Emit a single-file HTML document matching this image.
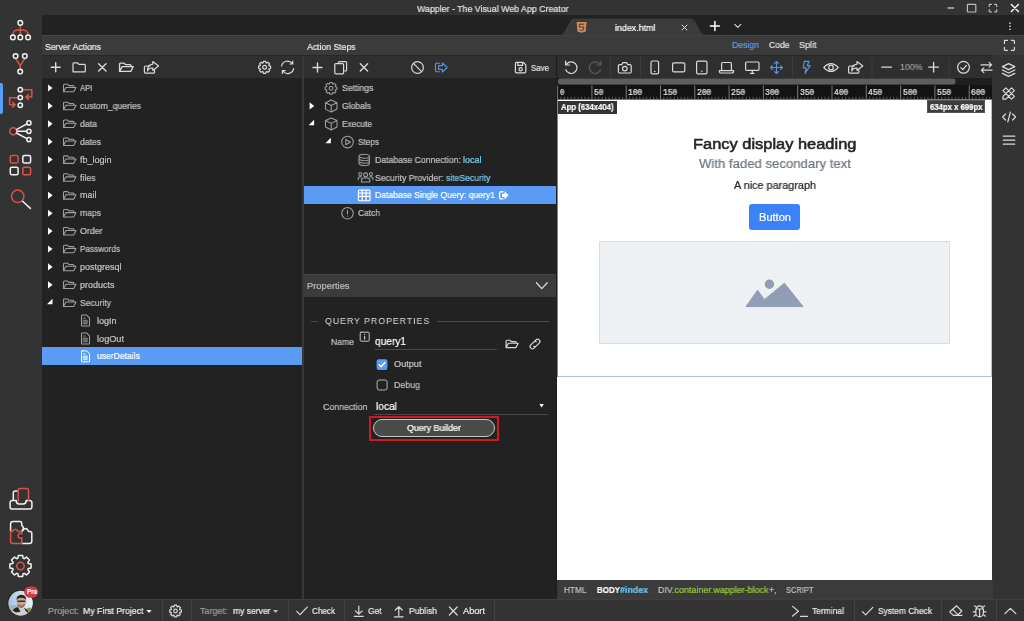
<!DOCTYPE html>
<html><head><meta charset="utf-8">
<style>
*{box-sizing:border-box;margin:0;padding:0}
html,body{width:1024px;height:621px;overflow:hidden;background:#222;font-family:"Liberation Sans",sans-serif;font-size:10px;color:#c4c4c4}
.abs{position:absolute}
.t{position:absolute;white-space:nowrap;transform-origin:0 50%;display:block;will-change:transform;-webkit-text-stroke:.22px currentColor}
svg{position:absolute;overflow:visible}
.i{fill:none;stroke:#dadada;stroke-width:1.2;stroke-linecap:round;stroke-linejoin:round}
.d{color:#9c9c9c;fill:none;stroke:#a0a0a0;stroke-width:1.05;stroke-linecap:round;stroke-linejoin:round}
.w{fill:none;stroke:#f2f2f2;stroke-width:1.5;stroke-linecap:round;stroke-linejoin:round}
.r{fill:none;stroke:#d9534d;stroke-width:1.5;stroke-linecap:round;stroke-linejoin:round}
.f{fill:#fff;stroke:none}
.dw{color:#fff;fill:none;stroke:#fff;stroke-width:1;stroke-linecap:round;stroke-linejoin:round}
.b{fill:none;stroke:#5794e6;stroke-width:1.15;stroke-linecap:round;stroke-linejoin:round}
</style></head><body>
<div class="abs" style="left:0px;top:0px;width:1024px;height:15px;background:#333333;"></div>
<div class="abs" style="left:0px;top:0px;width:42px;height:621px;background:#333333;"></div>
<div class="abs" style="left:42px;top:15px;width:982px;height:20px;background:#222222;"></div>
<div class="abs" style="left:42px;top:35px;width:982px;height:20px;background:#3b3b3b;border-top:1px solid #464646"></div>
<div class="abs" style="left:42px;top:55px;width:982px;height:1.4px;background:#272727;"></div>
<div class="abs" style="left:42px;top:56.4px;width:260px;height:21.2px;background:#2f2f2f;"></div>
<div class="abs" style="left:304px;top:56.4px;width:253px;height:21.2px;background:#2f2f2f;"></div>
<div class="abs" style="left:557px;top:56.4px;width:435px;height:21.6px;background:#2f2f2f;"></div>
<div class="abs" style="left:556px;top:56.4px;width:1px;height:543px;background:#1c1c1c;"></div>
<div class="abs" style="left:301.7px;top:56.4px;width:2.3px;height:543px;background:#383838;"></div>
<div class="abs" style="left:992px;top:55px;width:32px;height:545px;background:#333333;"></div>
<div class="abs" style="left:557px;top:78px;width:435px;height:7px;background:#1e1e1e;"></div>
<div class="abs" style="left:557px;top:85px;width:435px;height:15px;background:#131313;"></div>
<div class="abs" style="left:557px;top:99px;width:435px;height:481px;background:#ffffff;"></div>
<div class="abs" style="left:557px;top:580px;width:436px;height:19px;background:#3b3b3b;"></div>
<div class="abs" style="left:42px;top:599px;width:982px;height:22px;background:#333333;border-top:1px solid #404040"></div>
<svg style="left:0;top:0" width="1024" height="621" viewBox="0 0 1024 621"><path d="M559,35.5 C567,35.5 567,18.5 575.5,18.5 H690 C698.5,18.5 698.5,35.5 706,35.5 Z" fill="#3b3b3b"/></svg>
<span class="t" style="left:416.50px;top:4.25px;font-size:9.5px;line-height:9.5px;color:#e4e4e4;font-family:'Liberation Sans',sans-serif;transform:scaleX(0.9276);">Wappler - The Visual Web App Creator</span>
<span class="t" style="left:45.00px;top:42.94px;font-size:9.3px;line-height:9.3px;color:#ececec;font-family:'Liberation Sans',sans-serif;transform:scaleX(0.9340);">Server Actions</span>
<span class="t" style="left:307.00px;top:42.94px;font-size:9.3px;line-height:9.3px;color:#ececec;font-family:'Liberation Sans',sans-serif;transform:scaleX(0.9289);">Action Steps</span>
<span class="t" style="left:80.00px;top:84.07px;font-size:9px;line-height:9px;color:#c2c2c2;font-family:'Liberation Sans',sans-serif;transform:scaleX(0.8617);">API</span>
<span class="t" style="left:80.00px;top:101.96px;font-size:9px;line-height:9px;color:#c2c2c2;font-family:'Liberation Sans',sans-serif;transform:scaleX(0.9602);">custom_queries</span>
<span class="t" style="left:80.00px;top:119.85px;font-size:9px;line-height:9px;color:#c2c2c2;font-family:'Liberation Sans',sans-serif;transform:scaleX(0.9706);">data</span>
<span class="t" style="left:80.00px;top:137.74px;font-size:9px;line-height:9px;color:#c2c2c2;font-family:'Liberation Sans',sans-serif;transform:scaleX(0.9539);">dates</span>
<span class="t" style="left:80.00px;top:155.63px;font-size:9px;line-height:9px;color:#c2c2c2;font-family:'Liberation Sans',sans-serif;transform:scaleX(0.9993);">fb_login</span>
<span class="t" style="left:80.00px;top:173.52px;font-size:9px;line-height:9px;color:#c2c2c2;font-family:'Liberation Sans',sans-serif;transform:scaleX(0.9685);">files</span>
<span class="t" style="left:80.00px;top:191.41px;font-size:9px;line-height:9px;color:#c2c2c2;font-family:'Liberation Sans',sans-serif;transform:scaleX(0.9999);">mail</span>
<span class="t" style="left:80.00px;top:209.30px;font-size:9px;line-height:9px;color:#c2c2c2;font-family:'Liberation Sans',sans-serif;transform:scaleX(0.9543);">maps</span>
<span class="t" style="left:80.00px;top:227.19px;font-size:9px;line-height:9px;color:#c2c2c2;font-family:'Liberation Sans',sans-serif;transform:scaleX(0.9781);">Order</span>
<span class="t" style="left:80.00px;top:245.08px;font-size:9px;line-height:9px;color:#c2c2c2;font-family:'Liberation Sans',sans-serif;transform:scaleX(0.9088);">Passwords</span>
<span class="t" style="left:80.00px;top:262.97px;font-size:9px;line-height:9px;color:#c2c2c2;font-family:'Liberation Sans',sans-serif;transform:scaleX(0.9995);">postgresql</span>
<span class="t" style="left:80.00px;top:280.86px;font-size:9px;line-height:9px;color:#c2c2c2;font-family:'Liberation Sans',sans-serif;transform:scaleX(0.9995);">products</span>
<span class="t" style="left:80.00px;top:298.75px;font-size:9px;line-height:9px;color:#c2c2c2;font-family:'Liberation Sans',sans-serif;transform:scaleX(0.9536);">Security</span>
<div class="abs" style="left:42px;top:347px;width:260px;height:18px;background:#5a9cf4;"></div>
<span class="t" style="left:96.50px;top:316.64px;font-size:9px;line-height:9px;color:#c2c2c2;font-family:'Liberation Sans',sans-serif;transform:scaleX(0.9993);">logIn</span>
<span class="t" style="left:96.50px;top:334.53px;font-size:9px;line-height:9px;color:#c2c2c2;font-family:'Liberation Sans',sans-serif;transform:scaleX(1.0183);">logOut</span>
<span class="t" style="left:96.50px;top:352.42px;font-size:9px;line-height:9px;color:#ffffff;font-family:'Liberation Sans',sans-serif;transform:scaleX(0.9552);">userDetails</span>
<div class="abs" style="left:304px;top:186px;width:252px;height:18px;background:#5a9cf4;"></div>
<span class="t" style="left:341.50px;top:84.07px;font-size:9px;line-height:9px;color:#c2c2c2;font-family:'Liberation Sans',sans-serif;transform:scaleX(0.9687);">Settings</span>
<span class="t" style="left:341.50px;top:101.96px;font-size:9px;line-height:9px;color:#c2c2c2;font-family:'Liberation Sans',sans-serif;transform:scaleX(0.9504);">Globals</span>
<span class="t" style="left:341.50px;top:119.85px;font-size:9px;line-height:9px;color:#c2c2c2;font-family:'Liberation Sans',sans-serif;transform:scaleX(0.9226);">Execute</span>
<span class="t" style="left:358.00px;top:137.74px;font-size:9px;line-height:9px;color:#c2c2c2;font-family:'Liberation Sans',sans-serif;transform:scaleX(0.9125);">Steps</span>
<span class="t" style="left:374.50px;top:155.63px;font-size:9px;line-height:9px;color:#c2c2c2;font-family:'Liberation Sans',sans-serif;transform:scaleX(0.9657);">Database Connection:</span>
<span class="t" style="left:463.00px;top:155.63px;font-size:9px;line-height:9px;color:#7ecbf0;font-family:'Liberation Sans',sans-serif;transform:scaleX(0.9995);">local</span>
<span class="t" style="left:374.50px;top:173.52px;font-size:9px;line-height:9px;color:#c2c2c2;font-family:'Liberation Sans',sans-serif;transform:scaleX(0.9645);">Security Provider:</span>
<span class="t" style="left:445.50px;top:173.52px;font-size:9px;line-height:9px;color:#7ecbf0;font-family:'Liberation Sans',sans-serif;transform:scaleX(0.9567);">siteSecurity</span>
<span class="t" style="left:374.50px;top:191.41px;font-size:9px;line-height:9px;color:#ffffff;font-family:'Liberation Sans',sans-serif;transform:scaleX(0.9557);">Database Single Query: query1</span>
<span class="t" style="left:358.00px;top:209.30px;font-size:9px;line-height:9px;color:#c2c2c2;font-family:'Liberation Sans',sans-serif;transform:scaleX(0.9358);">Catch</span>
<span class="t" style="left:530.50px;top:63.57px;font-size:9px;line-height:9px;color:#e0e0e0;font-family:'Liberation Sans',sans-serif;transform:scaleX(0.8775);">Save</span>
<div class="abs" style="left:304px;top:274px;width:252px;height:23px;background:#3b3b3b;border-top:1px solid #464646"></div>
<span class="t" style="left:307.00px;top:282.24px;font-size:9.3px;line-height:9.3px;color:#bdbdbd;font-family:'Liberation Sans',sans-serif;transform:scaleX(1.0027);">Properties</span>
<div class="abs" style="left:310.5px;top:320.5px;width:7px;height:1px;background:#4a4a4a;"></div>
<div class="abs" style="left:437px;top:320.5px;width:112px;height:1px;background:#4a4a4a;"></div>
<span class="t" style="left:324.50px;top:316.48px;font-size:9.9px;line-height:9.9px;color:#dedede;font-family:'Liberation Sans',sans-serif;transform:scaleX(0.8990);-webkit-text-stroke:0;letter-spacing:1.0px;">QUERY PROPERTIES</span>
<span class="t" style="left:331.00px;top:337.67px;font-size:9px;line-height:9px;color:#c2c2c2;font-family:'Liberation Sans',sans-serif;transform:scaleX(0.9581);">Name</span>
<span class="t" style="left:375.00px;top:335.88px;font-size:11.5px;line-height:11.5px;color:#ffffff;font-family:'Liberation Sans',sans-serif;transform:scaleX(0.8817);">query1</span>
<div class="abs" style="left:374px;top:349px;width:122.5px;height:1px;background:#484848;"></div>
<span class="t" style="left:393.50px;top:360.47px;font-size:9px;line-height:9px;color:#c2c2c2;font-family:'Liberation Sans',sans-serif;transform:scaleX(1.0180);">Output</span>
<span class="t" style="left:393.50px;top:381.07px;font-size:9px;line-height:9px;color:#c2c2c2;font-family:'Liberation Sans',sans-serif;transform:scaleX(0.9804);">Debug</span>
<span class="t" style="left:323.00px;top:403.07px;font-size:9px;line-height:9px;color:#c2c2c2;font-family:'Liberation Sans',sans-serif;transform:scaleX(0.9774);">Connection</span>
<span class="t" style="left:375.50px;top:401.48px;font-size:11.5px;line-height:11.5px;color:#ffffff;font-family:'Liberation Sans',sans-serif;transform:scaleX(0.8879);">local</span>
<div class="abs" style="left:374px;top:414px;width:173.5px;height:1px;background:#484848;"></div>
<div class="abs" style="left:368.5px;top:415.5px;width:130.5px;height:25px;background:transparent;border:2px solid #cc1a20"></div>
<div class="abs" style="left:372.5px;top:419px;width:122px;height:17.5px;background:#4a4a4a;border:1px solid #c8c8c8;border-radius:9px"></div>
<span class="t" style="left:406.50px;top:424.07px;font-size:9px;line-height:9px;color:#ffffff;font-family:'Liberation Sans',sans-serif;transform:scaleX(0.9815);">Query Builder</span>
<span class="t" style="left:615.00px;top:23.84px;font-size:9.3px;line-height:9.3px;color:#ffffff;font-family:'Liberation Sans',sans-serif;transform:scaleX(0.9555);">index.html</span>
<span class="t" style="left:732.00px;top:41.14px;font-size:9.3px;line-height:9.3px;color:#5b9df5;font-family:'Liberation Sans',sans-serif;transform:scaleX(0.9327);">Design</span>
<span class="t" style="left:768.50px;top:41.14px;font-size:9.3px;line-height:9.3px;color:#e0e0e0;font-family:'Liberation Sans',sans-serif;transform:scaleX(0.9221);">Code</span>
<span class="t" style="left:799.00px;top:41.14px;font-size:9.3px;line-height:9.3px;color:#e0e0e0;font-family:'Liberation Sans',sans-serif;transform:scaleX(0.9674);">Split</span>
<span class="t" style="left:899.50px;top:63.07px;font-size:9px;line-height:9px;color:#9a9a9a;font-family:'Liberation Sans',sans-serif;transform:scaleX(0.9775);">100%</span>
<div class="abs" style="left:558px;top:100.5px;width:59px;height:13.5px;background:#333;"></div>
<span class="t" style="left:561.00px;top:103.12px;font-size:9px;line-height:9px;color:#ffffff;font-weight:bold;font-family:'Liberation Sans',sans-serif;transform:scaleX(0.8604);">App (634x404)</span>
<div class="abs" style="left:926.5px;top:100px;width:58.5px;height:13px;background:#3d3d3d;border:1px solid #555"></div>
<span class="t" style="left:930.00px;top:103.17px;font-size:9px;line-height:9px;color:#ffffff;font-weight:bold;font-family:'Liberation Sans',sans-serif;transform:scaleX(0.8601);">634px x 699px</span>
<span class="t" style="left:693.00px;top:136.38px;font-size:15.4px;line-height:15.4px;color:#212529;font-family:'Liberation Sans',sans-serif;transform:scaleX(1.0670);-webkit-text-stroke:.55px #212529;">Fancy display heading</span>
<span class="t" style="left:698.50px;top:156.91px;font-size:13.5px;line-height:13.5px;color:#6c757d;font-family:'Liberation Sans',sans-serif;transform:scaleX(0.9739);">With faded secondary text</span>
<span class="t" style="left:733.50px;top:179.85px;font-size:11px;line-height:11px;color:#212529;font-family:'Liberation Sans',sans-serif;transform:scaleX(0.9860);">A nice paragraph</span>
<div class="abs" style="left:749px;top:204px;width:50.5px;height:26px;background:#3b82f6;border-radius:3px"></div>
<span class="t" style="left:758.50px;top:211.95px;font-size:11px;line-height:11px;color:#ffffff;font-family:'Liberation Sans',sans-serif;transform:scaleX(1.0062);">Button</span>
<div class="abs" style="left:599px;top:241px;width:351px;height:103px;background:#eef1f4;border:1px solid #d9dde1"></div>
<div class="abs" style="left:557px;top:376px;width:435px;height:1px;background:#a9c5e3;"></div>
<div class="abs" style="left:556.5px;top:99px;width:1px;height:278px;background:#5f8fc8;"></div>
<div class="abs" style="left:991px;top:99px;width:1px;height:278px;background:#a9c5e3;"></div>
<div class="abs" style="left:557px;top:99px;width:435px;height:1px;background:#5585c0;"></div>
<span class="t" style="left:563.50px;top:585.87px;font-size:9px;line-height:9px;color:#c0c0c0;font-family:'Liberation Sans',sans-serif;transform:scaleX(0.9184);">HTML</span>
<span class="t" style="left:596.50px;top:585.87px;font-size:9px;line-height:9px;color:#ffffff;font-weight:bold;font-family:'Liberation Sans',sans-serif;transform:scaleX(0.8845);">BODY</span>
<span class="t" style="left:619.50px;top:585.87px;font-size:9px;line-height:9px;color:#6fc5ec;font-weight:bold;font-family:'Liberation Sans',sans-serif;transform:scaleX(0.9822);">#index</span>
<span class="t" style="left:657.50px;top:585.87px;font-size:9px;line-height:9px;color:#c0c0c0;font-family:'Liberation Sans',sans-serif;transform:scaleX(0.9665);">DIV</span>
<span class="t" style="left:672.00px;top:585.87px;font-size:9px;line-height:9px;color:#9ccc3c;font-family:'Liberation Sans',sans-serif;transform:scaleX(0.9944);">.container.wappler-block</span>
<span class="t" style="left:768.50px;top:585.87px;font-size:9px;line-height:9px;color:#c0c0c0;font-family:'Liberation Sans',sans-serif;transform:scaleX(0.9670);">+,</span>
<span class="t" style="left:786.00px;top:585.87px;font-size:9px;line-height:9px;color:#c0c0c0;font-family:'Liberation Sans',sans-serif;transform:scaleX(0.8333);">SCRIPT</span>
<span class="t" style="left:47.50px;top:606.98px;font-size:9.2px;line-height:9.2px;color:#9c9c9c;font-family:'Liberation Sans',sans-serif;transform:scaleX(0.9939);">Project:</span>
<span class="t" style="left:83.00px;top:606.98px;font-size:9.2px;line-height:9.2px;color:#f0f0f0;font-family:'Liberation Sans',sans-serif;transform:scaleX(0.9469);">My First Project</span>
<span class="t" style="left:200.00px;top:606.98px;font-size:9.2px;line-height:9.2px;color:#9c9c9c;font-family:'Liberation Sans',sans-serif;transform:scaleX(0.9777);">Target:</span>
<span class="t" style="left:232.50px;top:606.98px;font-size:9.2px;line-height:9.2px;color:#f0f0f0;font-family:'Liberation Sans',sans-serif;transform:scaleX(0.9286);">my server</span>
<span class="t" style="left:312.00px;top:606.98px;font-size:9.2px;line-height:9.2px;color:#e8e8e8;font-family:'Liberation Sans',sans-serif;transform:scaleX(0.8820);">Check</span>
<span class="t" style="left:368.00px;top:606.98px;font-size:9.2px;line-height:9.2px;color:#e8e8e8;font-family:'Liberation Sans',sans-serif;transform:scaleX(0.9103);">Get</span>
<span class="t" style="left:408.50px;top:606.98px;font-size:9.2px;line-height:9.2px;color:#e8e8e8;font-family:'Liberation Sans',sans-serif;transform:scaleX(0.9279);">Publish</span>
<span class="t" style="left:463.00px;top:606.98px;font-size:9.2px;line-height:9.2px;color:#e8e8e8;font-family:'Liberation Sans',sans-serif;transform:scaleX(1.0004);">Abort</span>
<span class="t" style="left:812.00px;top:606.98px;font-size:9.2px;line-height:9.2px;color:#e8e8e8;font-family:'Liberation Sans',sans-serif;transform:scaleX(0.9204);">Terminal</span>
<span class="t" style="left:877.50px;top:606.98px;font-size:9.2px;line-height:9.2px;color:#e8e8e8;font-family:'Liberation Sans',sans-serif;transform:scaleX(0.9105);">System Check</span>
<div class="abs" style="left:161.5px;top:600px;width:1px;height:21px;background:#444;"></div>
<div class="abs" style="left:191px;top:600px;width:1px;height:21px;background:#444;"></div>
<div class="abs" style="left:287.5px;top:600px;width:1px;height:21px;background:#444;"></div>
<div class="abs" style="left:343.5px;top:600px;width:1px;height:21px;background:#444;"></div>
<div class="abs" style="left:494px;top:600px;width:1px;height:21px;background:#444;"></div>
<div class="abs" style="left:854px;top:600px;width:1px;height:21px;background:#444;"></div>
<div class="abs" style="left:940.5px;top:600px;width:1px;height:21px;background:#444;"></div>
<div class="abs" style="left:996px;top:600px;width:1px;height:21px;background:#444;"></div>
<span class="t" style="left:559.60px;top:88.82px;font-size:8.2px;line-height:8.2px;color:#e4e4e4;font-family:'Liberation Mono',monospace;transform:scaleX(0.8841);">0</span>
<span class="t" style="left:593.90px;top:88.82px;font-size:8.2px;line-height:8.2px;color:#e4e4e4;font-family:'Liberation Mono',monospace;transform:scaleX(0.9451);">50</span>
<span class="t" style="left:628.20px;top:88.82px;font-size:8.2px;line-height:8.2px;color:#e4e4e4;font-family:'Liberation Mono',monospace;transform:scaleX(0.9654);">100</span>
<span class="t" style="left:662.50px;top:88.82px;font-size:8.2px;line-height:8.2px;color:#e4e4e4;font-family:'Liberation Mono',monospace;transform:scaleX(0.9654);">150</span>
<span class="t" style="left:696.80px;top:88.82px;font-size:8.2px;line-height:8.2px;color:#e4e4e4;font-family:'Liberation Mono',monospace;transform:scaleX(0.9654);">200</span>
<span class="t" style="left:731.10px;top:88.82px;font-size:8.2px;line-height:8.2px;color:#e4e4e4;font-family:'Liberation Mono',monospace;transform:scaleX(0.9654);">250</span>
<span class="t" style="left:765.40px;top:88.82px;font-size:8.2px;line-height:8.2px;color:#e4e4e4;font-family:'Liberation Mono',monospace;transform:scaleX(0.9654);">300</span>
<span class="t" style="left:799.70px;top:88.82px;font-size:8.2px;line-height:8.2px;color:#e4e4e4;font-family:'Liberation Mono',monospace;transform:scaleX(0.9654);">350</span>
<span class="t" style="left:834.00px;top:88.82px;font-size:8.2px;line-height:8.2px;color:#e4e4e4;font-family:'Liberation Mono',monospace;transform:scaleX(0.9654);">400</span>
<span class="t" style="left:868.30px;top:88.82px;font-size:8.2px;line-height:8.2px;color:#e4e4e4;font-family:'Liberation Mono',monospace;transform:scaleX(0.9654);">450</span>
<span class="t" style="left:902.60px;top:88.82px;font-size:8.2px;line-height:8.2px;color:#e4e4e4;font-family:'Liberation Mono',monospace;transform:scaleX(0.9654);">500</span>
<span class="t" style="left:936.90px;top:88.82px;font-size:8.2px;line-height:8.2px;color:#e4e4e4;font-family:'Liberation Mono',monospace;transform:scaleX(0.9654);">550</span>
<span class="t" style="left:971.20px;top:88.82px;font-size:8.2px;line-height:8.2px;color:#e4e4e4;font-family:'Liberation Mono',monospace;transform:scaleX(0.9654);">600</span>
<svg style="left:0;top:0" width="1024" height="621" viewBox="0 0 1024 621"><!-- full-page svg --><path class="" d="M0,83 H1 a2,2 0 0 1 2,2 V112 a2,2 0 0 1 -2,2 H0 Z" fill="#5b9df5"/><path class="r" d="M20.3,25.6 V34.6 M12.9,34.8 C12.9,30.6 15.6,29.7 20.3,29.7 C25,29.7 28.1,30.6 28.1,34.8" /><circle class="w" cx="20.3" cy="22.9" r="2.3" /><circle class="w" cx="12.9" cy="37.4" r="2.3" /><circle class="w" cx="20.3" cy="37.4" r="2.3" /><circle class="w" cx="28.1" cy="37.4" r="2.3" /><path class="r" d="M15.9,58.8 L20.2,65.6 L24.5,58.8 M20.2,65.6 V69" /><circle class="w" cx="15.6" cy="56.1" r="2.3" /><circle class="w" cx="24.8" cy="56.1" r="2.3" /><circle class="w" cx="20.2" cy="71.6" r="2.3" /><path class="r" d="M23.2,89.8 H31.8 V97 H26 M28.4,94.6 L25.8,97 L28.4,99.4" /><path class="r" d="M17.4,97.8 H9.6 V104.8 H15 M12.6,102.4 L15.2,104.8 L12.6,107.2" /><circle class="w" cx="20.3" cy="89.8" r="2.2" /><circle class="w" cx="20.3" cy="97.6" r="2.2" /><circle class="w" cx="20.3" cy="105.2" r="2.2" /><circle class="r" cx="13.3" cy="131.3" r="3.5" /><path class="w" d="M16.4,129.6 L26.9,123.9 M16.9,131.3 H26.6 M16.4,133 L26.9,138.7" /><circle class="w" cx="28.9" cy="122.9" r="2.1" /><circle class="w" cx="28.9" cy="131.3" r="2.1" /><circle class="w" cx="28.9" cy="139.6" r="2.1" /><rect class="r" x="10.3" y="155.4" width="7.8" height="7.6" rx="1.6" /><rect class="w" x="22.8" y="155.4" width="7.8" height="7.6" rx="1.6" /><rect class="w" x="10.3" y="167.2" width="7.8" height="7.6" rx="1.6" /><rect class="r" x="22.8" y="167.2" width="7.8" height="7.6" rx="1.6" /><circle class="r" cx="17.7" cy="196.3" r="6.2" /><path class="w" d="M22.6,201.3 L30.4,208.4" /><path class="w" d="M17.2,491 H15.2 a1.9,1.9 0 0 0 -1.9,1.9 V500.6 H12 a1.9,1.9 0 0 0 -1.9,1.9 V507 a2.1,2.1 0 0 0 2.1,2.1 H29.8 a2.1,2.1 0 0 0 2.1,-2.1 V502.5 a1.9,1.9 0 0 0 -1.9,-1.9 H26.2 Q26,503.9 23.4,503.9 H18.8 Q16.4,503.9 16.2,500.6 H13.3" /><path class="r" d="M18.2,501.2 V490.2 a1.7,1.7 0 0 1 1.7,-1.7 H26.8 a1.7,1.7 0 0 1 1.7,1.7 V501.2" /><path class="w" d="M10.6,531.4 V523.8 a2.4,2.4 0 0 1 2.4,-2.4 h7 a1.7,1.7 0 0 1 1.7,1.7 v1.9 c0,1 1.7,1.4 1.7,3 c0,1.5 -1,2.2 -1.6,3.4" /><path class="w" d="M21.8,531.4 c1,-.2 1.4,-2.9 3.6,-2.9 c2.2,0 2.5,2 3.2,2.9 h1.1 a2.1,2.1 0 0 1 2.1,2.1 v7.8 a2.2,2.2 0 0 1 -2.2,2.2 h-7.8" /><path class="r" d="M21.8,543.5 h-9 a2.2,2.2 0 0 1 -2.2,-2.2 v-9.9 h2 c.6,-1.6 1.5,-2.1 2.7,-2.1 c1.4,0 2.1,1 2.7,2.1 h3.8 v2.4 c-1.1,-.7 -3.7,-.5 -3.7,2 c0,2.5 2.5,2.7 3.7,2 z" /><path class="w" d="M28.28,563.40 L31.09,563.89 L31.09,568.11 L28.28,568.60 L27.84,569.67 L29.48,572.00 L26.50,574.98 L24.17,573.34 L23.10,573.78 L22.61,576.59 L18.39,576.59 L17.90,573.78 L16.83,573.34 L14.50,574.98 L11.52,572.00 L13.16,569.67 L12.72,568.60 L9.91,568.11 L9.91,563.89 L12.72,563.40 L13.16,562.33 L11.52,560.00 L14.50,557.02 L16.83,558.66 L17.90,558.22 L18.39,555.41 L22.61,555.41 L23.10,558.22 L24.17,558.66 L26.50,557.02 L29.48,560.00 L27.84,562.33 Z" /><circle class="r" cx="20.5" cy="566" r="3.7" /><defs><clipPath id="av"><circle cx="20.6" cy="603.1" r="12.3"/></clipPath><linearGradient id="sky" x1="0" x2="1" y1="0" y2="0"><stop offset="0" stop-color="#9ebfe2"/><stop offset=".55" stop-color="#d4e2ef"/><stop offset="1" stop-color="#eef2f5"/></linearGradient></defs><circle cx="20.3" cy="602.8" r="12.9" fill="#1e1e1e"/><g clip-path="url(#av)"><rect x="7" y="590" width="28" height="27" fill="url(#sky)"/><rect x="7" y="605" width="12" height="12" fill="#9fb3c4"/><path d="M26,616 L27,608.5 Q30,606.5 33.5,608.5 V616 Z" fill="#7f9c55"/><path d="M10.5,616 Q11,609.5 16,608 L20,607 L25,608 Q28.5,609.5 29,616 Z" fill="#cfcfcf"/><path d="M12.5,610.5 Q14,607.6 18,607 L20.5,611.8 L16,612.5 Z" fill="#262626"/><path d="M24,607.6 L27.6,610 L28.6,613.4 L25.6,611 Z" fill="#2c2c2c"/><ellipse cx="21.3" cy="601.8" rx="4.7" ry="6" fill="#c9a58e"/><path d="M16.5,600.6 Q16.2,595 21.4,594.8 Q26.4,595 26.1,600.4 Q25.4,597.8 21.3,597.8 Q17.4,597.8 16.5,600.6 Z" fill="#2b2420"/><rect x="17.3" y="600.4" width="8.2" height="1.5" rx=".6" fill="#3a302b"/><path d="M17.6,604 Q21.3,606.2 25,604 Q24.6,607.8 21.3,607.9 Q18,607.8 17.6,604 Z" fill="#8f6f5e"/><path d="M19.2,604.6 Q21.3,605.8 23.4,604.6 Q21.3,606.6 19.2,604.6Z" fill="#e8dcd4"/></g><rect class="" x="24.2" y="586.4" width="14" height="11.3" rx="5.6" fill="#d13b41"/><path class="i" d="M51.2,67.3 H60.2 M55.7,62.8 V71.8" style="stroke-width:1.4"/><path class="i" d="M73,71.8 V63.8 a.9,.9 0 0 1 .9,-.9 H77.6 L79,64.4 H84.4 a.9,.9 0 0 1 .9,.9 V71 a.9,.9 0 0 1 -.9,.9 H73.9 a.9,.9 0 0 1 -.9,-.9" /><path class="i" d="M98.6,63.8 L106,71 M106,63.8 L98.6,71" style="stroke-width:1.4"/><g transform="translate(119,62.6) scale(1.1)"><path class="i" d="M.5,8 V1.4 a.9,.9 0 0 1 .9,-.9 H4.6 L5.9,1.8 H10 a.9,.9 0 0 1 .9,.9 V3.6 M.5,8 L2.9,3.6 H13 L10.7,8 Z"/></g><path class="i" d="M150.2,66 H145.6 a1.2,1.2 0 0 0 -1.2,1.2 V72 a1.2,1.2 0 0 0 1.2,1.2 H153.4 a1.2,1.2 0 0 0 1.2,-1.2 V70.4" /><path class="i" d="M152.8,61.6 L158.6,66 L152.8,70.4 V68 Q148.6,67.8 147.6,71 Q147.2,64.6 152.8,64.2 Z" /><path class="i" d="M269.06,65.81 L270.58,66.11 L270.58,68.49 L269.06,68.79 L268.80,69.40 L269.67,70.69 L267.99,72.37 L266.70,71.50 L266.09,71.76 L265.79,73.28 L263.41,73.28 L263.11,71.76 L262.50,71.50 L261.21,72.37 L259.53,70.69 L260.40,69.40 L260.14,68.79 L258.62,68.49 L258.62,66.11 L260.14,65.81 L260.40,65.20 L259.53,63.91 L261.21,62.23 L262.50,63.10 L263.11,62.84 L263.41,61.32 L265.79,61.32 L266.09,62.84 L266.70,63.10 L267.99,62.23 L269.67,63.91 L268.80,65.20 Z" /><circle class="i" cx="264.6" cy="67.3" r="1.9" /><path class="i" d="M281.6,66 a6,6 0 0 1 10.8,-2.4 M293.6,68.6 a6,6 0 0 1 -10.8,2.4 M292.8,61.2 V64 H290 M282.4,73.4 V70.6 H285.2" /><path class="f" d="M48,84.4 L52.6,88.0 L48,91.6 Z" /><path class="f" d="M48,102.29 L52.6,105.89 L48,109.49 Z" /><path class="f" d="M48,120.18 L52.6,123.78 L48,127.38 Z" /><path class="f" d="M48,138.07000000000002 L52.6,141.67000000000002 L48,145.27 Z" /><path class="f" d="M48,155.96 L52.6,159.56 L48,163.16 Z" /><path class="f" d="M48,173.85 L52.6,177.45 L48,181.04999999999998 Z" /><path class="f" d="M48,191.74 L52.6,195.34 L48,198.94 Z" /><path class="f" d="M48,209.63000000000002 L52.6,213.23000000000002 L48,216.83 Z" /><path class="f" d="M48,227.52 L52.6,231.12 L48,234.72 Z" /><path class="f" d="M48,245.41 L52.6,249.01 L48,252.60999999999999 Z" /><path class="f" d="M48,263.29999999999995 L52.6,266.9 L48,270.5 Z" /><path class="f" d="M48,281.19 L52.6,284.79 L48,288.39000000000004 Z" /><path class="f" d="M52.5,298.68 V304.18 H47 Z" /><g transform="translate(63,83.8) scale(1.0)"><path class="d" d="M.5,8 V1.4 a.9,.9 0 0 1 .9,-.9 H4.6 L5.9,1.8 H10 a.9,.9 0 0 1 .9,.9 V3.6 M.5,8 L2.9,3.6 H13 L10.7,8 Z"/></g><g transform="translate(63,101.69) scale(1.0)"><path class="d" d="M.5,8 V1.4 a.9,.9 0 0 1 .9,-.9 H4.6 L5.9,1.8 H10 a.9,.9 0 0 1 .9,.9 V3.6 M.5,8 L2.9,3.6 H13 L10.7,8 Z"/></g><g transform="translate(63,119.58) scale(1.0)"><path class="d" d="M.5,8 V1.4 a.9,.9 0 0 1 .9,-.9 H4.6 L5.9,1.8 H10 a.9,.9 0 0 1 .9,.9 V3.6 M.5,8 L2.9,3.6 H13 L10.7,8 Z"/></g><g transform="translate(63,137.47000000000003) scale(1.0)"><path class="d" d="M.5,8 V1.4 a.9,.9 0 0 1 .9,-.9 H4.6 L5.9,1.8 H10 a.9,.9 0 0 1 .9,.9 V3.6 M.5,8 L2.9,3.6 H13 L10.7,8 Z"/></g><g transform="translate(63,155.36) scale(1.0)"><path class="d" d="M.5,8 V1.4 a.9,.9 0 0 1 .9,-.9 H4.6 L5.9,1.8 H10 a.9,.9 0 0 1 .9,.9 V3.6 M.5,8 L2.9,3.6 H13 L10.7,8 Z"/></g><g transform="translate(63,173.25) scale(1.0)"><path class="d" d="M.5,8 V1.4 a.9,.9 0 0 1 .9,-.9 H4.6 L5.9,1.8 H10 a.9,.9 0 0 1 .9,.9 V3.6 M.5,8 L2.9,3.6 H13 L10.7,8 Z"/></g><g transform="translate(63,191.14000000000001) scale(1.0)"><path class="d" d="M.5,8 V1.4 a.9,.9 0 0 1 .9,-.9 H4.6 L5.9,1.8 H10 a.9,.9 0 0 1 .9,.9 V3.6 M.5,8 L2.9,3.6 H13 L10.7,8 Z"/></g><g transform="translate(63,209.03000000000003) scale(1.0)"><path class="d" d="M.5,8 V1.4 a.9,.9 0 0 1 .9,-.9 H4.6 L5.9,1.8 H10 a.9,.9 0 0 1 .9,.9 V3.6 M.5,8 L2.9,3.6 H13 L10.7,8 Z"/></g><g transform="translate(63,226.92000000000002) scale(1.0)"><path class="d" d="M.5,8 V1.4 a.9,.9 0 0 1 .9,-.9 H4.6 L5.9,1.8 H10 a.9,.9 0 0 1 .9,.9 V3.6 M.5,8 L2.9,3.6 H13 L10.7,8 Z"/></g><g transform="translate(63,244.81) scale(1.0)"><path class="d" d="M.5,8 V1.4 a.9,.9 0 0 1 .9,-.9 H4.6 L5.9,1.8 H10 a.9,.9 0 0 1 .9,.9 V3.6 M.5,8 L2.9,3.6 H13 L10.7,8 Z"/></g><g transform="translate(63,262.7) scale(1.0)"><path class="d" d="M.5,8 V1.4 a.9,.9 0 0 1 .9,-.9 H4.6 L5.9,1.8 H10 a.9,.9 0 0 1 .9,.9 V3.6 M.5,8 L2.9,3.6 H13 L10.7,8 Z"/></g><g transform="translate(63,280.59000000000003) scale(1.0)"><path class="d" d="M.5,8 V1.4 a.9,.9 0 0 1 .9,-.9 H4.6 L5.9,1.8 H10 a.9,.9 0 0 1 .9,.9 V3.6 M.5,8 L2.9,3.6 H13 L10.7,8 Z"/></g><g transform="translate(63,298.48) scale(1.0)"><path class="d" d="M.5,8 V1.4 a.9,.9 0 0 1 .9,-.9 H4.6 L5.9,1.8 H10 a.9,.9 0 0 1 .9,.9 V3.6 M.5,8 L2.9,3.6 H13 L10.7,8 Z"/></g><g transform="translate(81,314.57)"><path class="d" d="M1.2,.5 H5.6 L8.5,3.4 V10.8 a.7,.7 0 0 1 -.7,.7 H1.2 a.7,.7 0 0 1 -.7,-.7 V1.2 a.7,.7 0 0 1 .7,-.7 Z"/><rect x="2.6" y="5.6" width="3.6" height="3.8" class="d" style="stroke-width:.6;fill:currentColor;fill-opacity:.55"/><path class="d" style="stroke-width:.8" d="M2.5,3.6 H4.2"/></g><g transform="translate(81,332.46000000000004)"><path class="d" d="M1.2,.5 H5.6 L8.5,3.4 V10.8 a.7,.7 0 0 1 -.7,.7 H1.2 a.7,.7 0 0 1 -.7,-.7 V1.2 a.7,.7 0 0 1 .7,-.7 Z"/><rect x="2.6" y="5.6" width="3.6" height="3.8" class="d" style="stroke-width:.6;fill:currentColor;fill-opacity:.55"/><path class="d" style="stroke-width:.8" d="M2.5,3.6 H4.2"/></g><g transform="translate(81,350.35)"><path class="dw" d="M1.2,.5 H5.6 L8.5,3.4 V10.8 a.7,.7 0 0 1 -.7,.7 H1.2 a.7,.7 0 0 1 -.7,-.7 V1.2 a.7,.7 0 0 1 .7,-.7 Z"/><rect x="2.6" y="5.6" width="3.6" height="3.8" class="dw" style="stroke-width:.6;fill:currentColor;fill-opacity:.55"/><path class="dw" style="stroke-width:.8" d="M2.5,3.6 H4.2"/></g><path class="i" d="M313,67.5 H322 M317.5,63 V72" style="stroke-width:1.4"/><path class="i" d="M338.4,63.4 V62.6 a1,1 0 0 1 1,-1 H345.6 a1,1 0 0 1 1,1 V70 a1,1 0 0 1 -1,1 H344.6" /><path class="i" d="M335.8,63.6 H342.6 a1,1 0 0 1 1,1 V72.8 a1,1 0 0 1 -1,1 H335.8 a1,1 0 0 1 -1,-1 V64.6 a1,1 0 0 1 1,-1 Z" /><path class="i" d="M360.3,63.8 L367.6,71.1 M367.6,63.8 L360.3,71.1" style="stroke-width:1.4"/><circle class="i" cx="417.5" cy="67.5" r="5.9" /><path class="i" d="M413.4,63.4 L421.6,71.6" /><path class="b" d="M439.6,63.2 H436.6 a1.1,1.1 0 0 0 -1.1,1.1 V70.6 a1.1,1.1 0 0 0 1.1,1.1 H439.6" /><path class="b" d="M438.6,65.6 H442.4 V63 L447.2,67.5 L442.4,72 V69.4 H438.6 Z" /><path class="i" d="M516.4,62.4 H523.4 L525.8,64.8 V71.8 a1,1 0 0 1 -1,1 H516.4 a1,1 0 0 1 -1,-1 V63.4 a1,1 0 0 1 1,-1 Z M517.8,62.6 V65.4 H522.6 V62.6" /><circle class="i" cx="520.6" cy="69.2" r="1.6" /><path class="d" d="M335.36,86.84 L336.88,87.13 L336.88,89.47 L335.36,89.76 L335.11,90.36 L335.99,91.63 L334.33,93.29 L333.06,92.41 L332.46,92.66 L332.17,94.18 L329.83,94.18 L329.54,92.66 L328.94,92.41 L327.67,93.29 L326.01,91.63 L326.89,90.36 L326.64,89.76 L325.12,89.47 L325.12,87.13 L326.64,86.84 L326.89,86.24 L326.01,84.97 L327.67,83.31 L328.94,84.19 L329.54,83.94 L329.83,82.42 L332.17,82.42 L332.46,83.94 L333.06,84.19 L334.33,83.31 L335.99,84.97 L335.11,86.24 Z" /><circle class="d" cx="331" cy="88.3" r="1.9" /><path class="f" d="M309.6,102.29 L314.20000000000005,105.89 L309.6,109.49 Z" /><path class="d" d="M331.2,100.09 L337,102.69 V109.09 L331.2,112.09 L325.5,109.09 V102.69 Z M325.5,102.69 L331.2,105.49000000000001 L337,102.69 M331.2,105.49000000000001 V112.09" /><path class="f" d="M314.1,119.78 V125.28 H308.6 Z" /><path class="d" d="M331.2,117.98 L337,120.58 V126.98 L331.2,129.98000000000002 L325.5,126.98 V120.58 Z M325.5,120.58 L331.2,123.38000000000001 L337,120.58 M331.2,123.38000000000001 V129.98000000000002" /><path class="f" d="M330.9,137.67000000000002 V143.17000000000002 H325.4 Z" /><circle class="d" cx="347.5" cy="142.07000000000002" r="5.8" /><path class="d" d="M345.8,139.47000000000003 L350.4,142.07000000000002 L345.8,144.67000000000002 Z" /><path class="d" d="M359,156.16 a5.2,2 0 0 1 10.4,0 a5.2,2 0 0 1 -10.4,0 V163.56 a5.2,2 0 0 0 10.4,0 V156.16 M359,158.66 a5.2,2 0 0 0 10.4,0 M359,161.16 a5.2,2 0 0 0 10.4,0" /><circle class="d" cx="365.6" cy="174.85" r="2" /><path class="d" d="M361.4,182.04999999999998 V180.64999999999998 a2.6,2.6 0 0 1 2.6,-2.6 H367.2 a2.6,2.6 0 0 1 2.6,2.6 V182.04999999999998 Z" /><circle class="d" cx="360.2" cy="174.04999999999998" r="1.5" /><circle class="d" cx="371" cy="174.04999999999998" r="1.5" /><path class="d" d="M358.2,179.64999999999998 V178.85 a2,2 0 0 1 2,-2 H361.4 M373,179.64999999999998 V178.85 a2,2 0 0 0 -2,-2 H369.8" /><path class="dw" d="M359.4,190.14000000000001 H369 a1,1 0 0 1 1,1 V199.74 a1,1 0 0 1 -1,1 H359.4 a1,1 0 0 1 -1,-1 V191.14000000000001 a1,1 0 0 1 1,-1 Z M358.4,193.14000000000001 H370 M358.4,196.34 H370 M362.3,190.14000000000001 V200.74 M366.1,190.14000000000001 V200.74" style="stroke-width:1.2"/><path class="dw" d="M503,191.74 H501 a1.4,1.4 0 0 0 -1.4,1.4 V197.54 a1.4,1.4 0 0 0 1.4,1.4 H503" style="stroke-width:1.3"/><path class="f" d="M504.6,191.14000000000001 L508.6,195.34 L504.6,199.54 V196.94 H502 V193.74 H504.6 Z" /><circle class="d" cx="347.5" cy="213.23000000000002" r="5.7" /><path class="d" d="M347.5,210.23000000000002 V214.03000000000003 M347.5,216.03000000000003 V216.23000000000002" /><path class="i" d="M536.4,282.8 L541.8,288.6 L547.2,282.8" style="stroke-width:1.3"/><rect class="i" x="360.2" y="332.2" width="9" height="9" rx="1" style="stroke-width:.9"/><path class="i" d="M364.7,336.4 V339 M364.7,334.4 V334.6" style="stroke-width:1.1"/><g transform="translate(505.6,339.8) scale(0.97)"><path class="i" d="M.5,8 V1.4 a.9,.9 0 0 1 .9,-.9 H4.6 L5.9,1.8 H10 a.9,.9 0 0 1 .9,.9 V3.6 M.5,8 L2.9,3.6 H13 L10.7,8 Z"/></g><g transform="rotate(-45 535 344)"><path class="i" d="M533.2,346.3 H531.4 a2.3,2.3 0 0 1 0,-4.6 H535.4 a2.3,2.3 0 0 1 2.2,1.6 M536.8,341.7 H538.6 a2.3,2.3 0 0 1 0,4.6 H534.6 a2.3,2.3 0 0 1 -2.2,-1.6" style="stroke-width:1.15"/></g><rect class="" x="376.6" y="359.2" width="10.8" height="10.8" rx="2" fill="#5a9cf4"/><path class="dw" d="M379.2,364.8 L381.2,366.8 L384.8,362.6" style="stroke-width:1.5"/><rect class="" x="377.1" y="380" width="10" height="10" rx="2" fill="none" stroke="#b4b4b4" stroke-width="1"/><path class="f" d="M539.4,404 H543.8 L541.6,407.6 Z" /><path class="i" d="M948,8 H953.6" style="stroke-width:1.3;stroke:#bbb"/><rect class="i" x="967.4" y="4.4" width="8.4" height="7.6" rx="0.8" style="stroke:#bbb"/><path class="i" d="M989.2,6.6 V5.2 a.8,.8 0 0 1 .8,-.8 H991.4 M994.6,4.4 H996 a.8,.8 0 0 1 .8,.8 V6.6 M996.8,9.6 V11 a.8,.8 0 0 1 -.8,.8 H994.6 M991.4,11.8 H990 a.8,.8 0 0 1 -.8,-.8 V9.6" style="stroke:#bbb"/><path class="i" d="M1011.4,4.4 L1018.4,11.6 M1018.4,4.4 L1011.4,11.6" style="stroke:#fff;stroke-width:1.4"/><circle class="f" cx="1010" cy="23.2" r="0.8" /><circle class="f" cx="1010" cy="26.2" r="0.8" /><circle class="f" cx="1010" cy="29.2" r="0.8" /><path class="" d="M576.6,22 H586.6 L585.7,31.4 L581.6,32.8 L577.5,31.4 Z" fill="#d98a4e"/><path class="" d="M579.2,24.2 H584.2 M579.2,24.2 L579.5,27 H583.8 L583.5,29.8 L581.6,30.5 L579.7,29.8" fill="none" stroke="#3b3b3b" stroke-width="1"/><path class="i" d="M682,25 L687,30 M687,25 L682,30" style="stroke-width:1;stroke:#ddd"/><path class="i" d="M710.4,26 H719.4 M714.9,21.5 V30.5" style="stroke-width:1.5;stroke:#fff"/><path class="i" d="M734.8,24.4 L737.8,27.4 L740.8,24.4" style="stroke-width:1.1"/><path class="i" d="M1004.4,43.4 V41.2 a.8,.8 0 0 1 .8,-.8 H1007.4 M1011.4,40.4 H1013.6 a.8,.8 0 0 1 .8,.8 V43.4 M1014.4,47.4 V49.6 a.8,.8 0 0 1 -.8,.8 H1011.4 M1007.4,50.4 H1005.2 a.8,.8 0 0 1 -.8,-.8 V47.4" /><rect x="610" y="56.4" width="1" height="21.6" fill="#3c3c3c"/><rect x="640" y="56.4" width="1" height="21.6" fill="#3c3c3c"/><rect x="792" y="56.4" width="1" height="21.6" fill="#3c3c3c"/><rect x="871.5" y="56.4" width="1" height="21.6" fill="#3c3c3c"/><rect x="948.5" y="56.4" width="1" height="21.6" fill="#3c3c3c"/><path class="i" d="M566.4,64.4 a5.8,5.8 0 1 1 -.6,5.4 M565.6,61 V65 H569.6" style="stroke-width:1.2"/><path class="i" d="M600,64.4 a5.8,5.8 0 1 0 .6,5.4 M600.8,61 V65 H596.8" style="stroke:#5c5c5c;stroke-width:1.2"/><path class="i" d="M619.6,64.6 H621.8 L623,62.6 H626.6 L627.8,64.6 H630 a1.2,1.2 0 0 1 1.2,1.2 V71.8 a1.2,1.2 0 0 1 -1.2,1.2 H619.6 a1.2,1.2 0 0 1 -1.2,-1.2 V65.8 a1.2,1.2 0 0 1 1.2,-1.2 Z" /><circle class="i" cx="624.8" cy="68.6" r="2.3" /><rect class="i" x="651" y="61" width="7.6" height="12.8" rx="1.4" /><path class="i" d="M654.6,71.4 H655" /><rect class="i" x="672.6" y="62.8" width="12.2" height="9" rx="1.3" /><rect class="i" x="696.6" y="61.2" width="10.4" height="12.6" rx="1.3" /><path class="i" d="M701.6,71.2 H702" /><path class="i" d="M721.6,70.4 V63.6 a1.1,1.1 0 0 1 1.1,-1.1 H730.3 a1.1,1.1 0 0 1 1.1,1.1 V70.4 M719.4,70.6 H733.6 V71.4 a1.6,1.6 0 0 1 -1.6,1.6 H721 a1.6,1.6 0 0 1 -1.6,-1.6 Z" /><rect class="i" x="745.6" y="62" width="13.4" height="8.4" rx="1.1" /><path class="i" d="M750.6,73.4 H754 M752.3,70.4 V73.4" /><path class="b" d="M776.5,61.6 V73.4 M770.6,67.5 H782.4 M774.6,63.4 L776.5,61.5 L778.4,63.4 M774.6,71.6 L776.5,73.5 L778.4,71.6 M772.4,65.6 L770.5,67.5 L772.4,69.4 M780.6,65.6 L782.5,67.5 L780.6,69.4" /><path class="b" d="M804.4,61.4 H809 L807.2,65.6 H810.2 L805,73.4 L806.2,67.8 H803.2 Z" /><path class="i" d="M823.8,67.5 Q831,59.6 838.2,67.5 Q831,75.4 823.8,67.5 Z" /><circle class="i" cx="831" cy="67.5" r="2.3" /><path class="i" d="M854.4,66 H849.8 a1.2,1.2 0 0 0 -1.2,1.2 V72 a1.2,1.2 0 0 0 1.2,1.2 H857.6 a1.2,1.2 0 0 0 1.2,-1.2 V70.4" /><path class="i" d="M857,61.6 L862.8,66 L857,70.4 V68 Q852.8,67.8 851.8,71 Q851.4,64.6 857,64.2 Z" /><path class="i" d="M881.8,67.2 H891.4" style="stroke-width:1.3"/><path class="i" d="M928.8,67.2 H938.4 M933.6,62.4 V72" style="stroke-width:1.3"/><circle class="i" cx="963.5" cy="67.3" r="5.9" /><path class="i" d="M960.8,67.6 L962.8,69.6 L966.4,65.4" /><path class="i" d="M981,64.8 H991.6 M989.2,62.4 L991.6,64.8 L989.2,67.2 M992,70.2 H981.4 M983.8,67.8 L981.4,70.2 L983.8,72.6" /><rect class="" x="557.8" y="78.6" width="397.8" height="6" rx="3" fill="#5e5e5e"/><rect x="557.10" y="85.5" width="1" height="13.5" fill="#7a7a7a"/><rect x="560.53" y="96.8" width=".8" height="2.2" fill="#5e6b7a"/><rect x="563.96" y="96.8" width=".8" height="2.2" fill="#5e6b7a"/><rect x="567.39" y="96.8" width=".8" height="2.2" fill="#5e6b7a"/><rect x="570.82" y="96.8" width=".8" height="2.2" fill="#5e6b7a"/><rect x="574.25" y="96.8" width=".8" height="2.2" fill="#5e6b7a"/><rect x="577.68" y="96.8" width=".8" height="2.2" fill="#5e6b7a"/><rect x="581.11" y="96.8" width=".8" height="2.2" fill="#5e6b7a"/><rect x="584.54" y="96.8" width=".8" height="2.2" fill="#5e6b7a"/><rect x="587.97" y="96.8" width=".8" height="2.2" fill="#5e6b7a"/><rect x="591.40" y="85.5" width="1" height="13.5" fill="#7a7a7a"/><rect x="594.83" y="96.8" width=".8" height="2.2" fill="#5e6b7a"/><rect x="598.26" y="96.8" width=".8" height="2.2" fill="#5e6b7a"/><rect x="601.69" y="96.8" width=".8" height="2.2" fill="#5e6b7a"/><rect x="605.12" y="96.8" width=".8" height="2.2" fill="#5e6b7a"/><rect x="608.55" y="96.8" width=".8" height="2.2" fill="#5e6b7a"/><rect x="611.98" y="96.8" width=".8" height="2.2" fill="#5e6b7a"/><rect x="615.41" y="96.8" width=".8" height="2.2" fill="#5e6b7a"/><rect x="618.84" y="96.8" width=".8" height="2.2" fill="#5e6b7a"/><rect x="622.27" y="96.8" width=".8" height="2.2" fill="#5e6b7a"/><rect x="625.70" y="85.5" width="1" height="13.5" fill="#7a7a7a"/><rect x="629.13" y="96.8" width=".8" height="2.2" fill="#5e6b7a"/><rect x="632.56" y="96.8" width=".8" height="2.2" fill="#5e6b7a"/><rect x="635.99" y="96.8" width=".8" height="2.2" fill="#5e6b7a"/><rect x="639.42" y="96.8" width=".8" height="2.2" fill="#5e6b7a"/><rect x="642.85" y="96.8" width=".8" height="2.2" fill="#5e6b7a"/><rect x="646.28" y="96.8" width=".8" height="2.2" fill="#5e6b7a"/><rect x="649.71" y="96.8" width=".8" height="2.2" fill="#5e6b7a"/><rect x="653.14" y="96.8" width=".8" height="2.2" fill="#5e6b7a"/><rect x="656.57" y="96.8" width=".8" height="2.2" fill="#5e6b7a"/><rect x="660.00" y="85.5" width="1" height="13.5" fill="#7a7a7a"/><rect x="663.43" y="96.8" width=".8" height="2.2" fill="#5e6b7a"/><rect x="666.86" y="96.8" width=".8" height="2.2" fill="#5e6b7a"/><rect x="670.29" y="96.8" width=".8" height="2.2" fill="#5e6b7a"/><rect x="673.72" y="96.8" width=".8" height="2.2" fill="#5e6b7a"/><rect x="677.15" y="96.8" width=".8" height="2.2" fill="#5e6b7a"/><rect x="680.58" y="96.8" width=".8" height="2.2" fill="#5e6b7a"/><rect x="684.01" y="96.8" width=".8" height="2.2" fill="#5e6b7a"/><rect x="687.44" y="96.8" width=".8" height="2.2" fill="#5e6b7a"/><rect x="690.87" y="96.8" width=".8" height="2.2" fill="#5e6b7a"/><rect x="694.30" y="85.5" width="1" height="13.5" fill="#7a7a7a"/><rect x="697.73" y="96.8" width=".8" height="2.2" fill="#5e6b7a"/><rect x="701.16" y="96.8" width=".8" height="2.2" fill="#5e6b7a"/><rect x="704.59" y="96.8" width=".8" height="2.2" fill="#5e6b7a"/><rect x="708.02" y="96.8" width=".8" height="2.2" fill="#5e6b7a"/><rect x="711.45" y="96.8" width=".8" height="2.2" fill="#5e6b7a"/><rect x="714.88" y="96.8" width=".8" height="2.2" fill="#5e6b7a"/><rect x="718.31" y="96.8" width=".8" height="2.2" fill="#5e6b7a"/><rect x="721.74" y="96.8" width=".8" height="2.2" fill="#5e6b7a"/><rect x="725.17" y="96.8" width=".8" height="2.2" fill="#5e6b7a"/><rect x="728.60" y="85.5" width="1" height="13.5" fill="#7a7a7a"/><rect x="732.03" y="96.8" width=".8" height="2.2" fill="#5e6b7a"/><rect x="735.46" y="96.8" width=".8" height="2.2" fill="#5e6b7a"/><rect x="738.89" y="96.8" width=".8" height="2.2" fill="#5e6b7a"/><rect x="742.32" y="96.8" width=".8" height="2.2" fill="#5e6b7a"/><rect x="745.75" y="96.8" width=".8" height="2.2" fill="#5e6b7a"/><rect x="749.18" y="96.8" width=".8" height="2.2" fill="#5e6b7a"/><rect x="752.61" y="96.8" width=".8" height="2.2" fill="#5e6b7a"/><rect x="756.04" y="96.8" width=".8" height="2.2" fill="#5e6b7a"/><rect x="759.47" y="96.8" width=".8" height="2.2" fill="#5e6b7a"/><rect x="762.90" y="85.5" width="1" height="13.5" fill="#7a7a7a"/><rect x="766.33" y="96.8" width=".8" height="2.2" fill="#5e6b7a"/><rect x="769.76" y="96.8" width=".8" height="2.2" fill="#5e6b7a"/><rect x="773.19" y="96.8" width=".8" height="2.2" fill="#5e6b7a"/><rect x="776.62" y="96.8" width=".8" height="2.2" fill="#5e6b7a"/><rect x="780.05" y="96.8" width=".8" height="2.2" fill="#5e6b7a"/><rect x="783.48" y="96.8" width=".8" height="2.2" fill="#5e6b7a"/><rect x="786.91" y="96.8" width=".8" height="2.2" fill="#5e6b7a"/><rect x="790.34" y="96.8" width=".8" height="2.2" fill="#5e6b7a"/><rect x="793.77" y="96.8" width=".8" height="2.2" fill="#5e6b7a"/><rect x="797.20" y="85.5" width="1" height="13.5" fill="#7a7a7a"/><rect x="800.63" y="96.8" width=".8" height="2.2" fill="#5e6b7a"/><rect x="804.06" y="96.8" width=".8" height="2.2" fill="#5e6b7a"/><rect x="807.49" y="96.8" width=".8" height="2.2" fill="#5e6b7a"/><rect x="810.92" y="96.8" width=".8" height="2.2" fill="#5e6b7a"/><rect x="814.35" y="96.8" width=".8" height="2.2" fill="#5e6b7a"/><rect x="817.78" y="96.8" width=".8" height="2.2" fill="#5e6b7a"/><rect x="821.21" y="96.8" width=".8" height="2.2" fill="#5e6b7a"/><rect x="824.64" y="96.8" width=".8" height="2.2" fill="#5e6b7a"/><rect x="828.07" y="96.8" width=".8" height="2.2" fill="#5e6b7a"/><rect x="831.50" y="85.5" width="1" height="13.5" fill="#7a7a7a"/><rect x="834.93" y="96.8" width=".8" height="2.2" fill="#5e6b7a"/><rect x="838.36" y="96.8" width=".8" height="2.2" fill="#5e6b7a"/><rect x="841.79" y="96.8" width=".8" height="2.2" fill="#5e6b7a"/><rect x="845.22" y="96.8" width=".8" height="2.2" fill="#5e6b7a"/><rect x="848.65" y="96.8" width=".8" height="2.2" fill="#5e6b7a"/><rect x="852.08" y="96.8" width=".8" height="2.2" fill="#5e6b7a"/><rect x="855.51" y="96.8" width=".8" height="2.2" fill="#5e6b7a"/><rect x="858.94" y="96.8" width=".8" height="2.2" fill="#5e6b7a"/><rect x="862.37" y="96.8" width=".8" height="2.2" fill="#5e6b7a"/><rect x="865.80" y="85.5" width="1" height="13.5" fill="#7a7a7a"/><rect x="869.23" y="96.8" width=".8" height="2.2" fill="#5e6b7a"/><rect x="872.66" y="96.8" width=".8" height="2.2" fill="#5e6b7a"/><rect x="876.09" y="96.8" width=".8" height="2.2" fill="#5e6b7a"/><rect x="879.52" y="96.8" width=".8" height="2.2" fill="#5e6b7a"/><rect x="882.95" y="96.8" width=".8" height="2.2" fill="#5e6b7a"/><rect x="886.38" y="96.8" width=".8" height="2.2" fill="#5e6b7a"/><rect x="889.81" y="96.8" width=".8" height="2.2" fill="#5e6b7a"/><rect x="893.24" y="96.8" width=".8" height="2.2" fill="#5e6b7a"/><rect x="896.67" y="96.8" width=".8" height="2.2" fill="#5e6b7a"/><rect x="900.10" y="85.5" width="1" height="13.5" fill="#7a7a7a"/><rect x="903.53" y="96.8" width=".8" height="2.2" fill="#5e6b7a"/><rect x="906.96" y="96.8" width=".8" height="2.2" fill="#5e6b7a"/><rect x="910.39" y="96.8" width=".8" height="2.2" fill="#5e6b7a"/><rect x="913.82" y="96.8" width=".8" height="2.2" fill="#5e6b7a"/><rect x="917.25" y="96.8" width=".8" height="2.2" fill="#5e6b7a"/><rect x="920.68" y="96.8" width=".8" height="2.2" fill="#5e6b7a"/><rect x="924.11" y="96.8" width=".8" height="2.2" fill="#5e6b7a"/><rect x="927.54" y="96.8" width=".8" height="2.2" fill="#5e6b7a"/><rect x="930.97" y="96.8" width=".8" height="2.2" fill="#5e6b7a"/><rect x="934.40" y="85.5" width="1" height="13.5" fill="#7a7a7a"/><rect x="937.83" y="96.8" width=".8" height="2.2" fill="#5e6b7a"/><rect x="941.26" y="96.8" width=".8" height="2.2" fill="#5e6b7a"/><rect x="944.69" y="96.8" width=".8" height="2.2" fill="#5e6b7a"/><rect x="948.12" y="96.8" width=".8" height="2.2" fill="#5e6b7a"/><rect x="951.55" y="96.8" width=".8" height="2.2" fill="#5e6b7a"/><rect x="954.98" y="96.8" width=".8" height="2.2" fill="#5e6b7a"/><rect x="958.41" y="96.8" width=".8" height="2.2" fill="#5e6b7a"/><rect x="961.84" y="96.8" width=".8" height="2.2" fill="#5e6b7a"/><rect x="965.27" y="96.8" width=".8" height="2.2" fill="#5e6b7a"/><rect x="968.70" y="85.5" width="1" height="13.5" fill="#7a7a7a"/><rect x="972.13" y="96.8" width=".8" height="2.2" fill="#5e6b7a"/><rect x="975.56" y="96.8" width=".8" height="2.2" fill="#5e6b7a"/><rect x="978.99" y="96.8" width=".8" height="2.2" fill="#5e6b7a"/><rect x="982.42" y="96.8" width=".8" height="2.2" fill="#5e6b7a"/><rect x="985.85" y="96.8" width=".8" height="2.2" fill="#5e6b7a"/><rect x="989.28" y="96.8" width=".8" height="2.2" fill="#5e6b7a"/><path class="i" d="M1002.4,66.6 L1008.6,63.6 L1014.8,66.6 L1008.6,69.6 Z M1002.4,70 L1008.6,73 L1014.8,70 M1002.4,73.4 L1008.6,76.4 L1014.8,73.4" style="stroke-width:1.3"/><path class="i" d="M1003,96.4 L1011.6,87.8 L1014.4,90.6 L1005.8,99.2 H1003 Z M1003,90.6 L1005.8,87.8 L1014.4,96.4 L1011.6,99.2 Z" style="stroke-width:1.2"/><path class="i" d="M1002.6,117 L1005.6,114 M1002.6,117 L1005.6,120 M1015.6,117 L1012.6,114 M1015.6,117 L1012.6,120 M1010.4,112 L1007.8,122" style="stroke-width:1.2"/><path class="i" d="M1003.4,136.2 H1014.8 M1003.4,140.2 H1014.8 M1003.4,144.2 H1014.8" style="stroke-width:1.2"/><path class="" d="M746,306.6 L757.6,290.2 L764.4,299.6 L784.4,283.2 L803,306.6 Z" fill="#919db5" stroke="#919db5" stroke-width="1" stroke-linejoin="round"/><circle class="" cx="769.4" cy="284.2" r="4.7" fill="#919db5"/><path class="i" d="M179.77,609.58 L181.29,609.85 L181.29,612.15 L179.77,612.42 L179.53,613.01 L180.41,614.28 L178.78,615.91 L177.51,615.03 L176.92,615.27 L176.65,616.79 L174.35,616.79 L174.08,615.27 L173.49,615.03 L172.22,615.91 L170.59,614.28 L171.47,613.01 L171.23,612.42 L169.71,612.15 L169.71,609.85 L171.23,609.58 L171.47,608.99 L170.59,607.72 L172.22,606.09 L173.49,606.97 L174.08,606.73 L174.35,605.21 L176.65,605.21 L176.92,606.73 L177.51,606.97 L178.78,606.09 L180.41,607.72 L179.53,608.99 Z" /><circle class="i" cx="175.5" cy="611" r="1.8" /><path class="f" d="M146.4,610 H151.6 L149,613 Z" /><path class="" d="M273,610 H278.2 L275.6,613 Z" fill="#bbb"/><path class="i" d="M296.8,611.4 L300,614.6 L307.2,607.2" style="stroke-width:1.2"/><path class="i" d="M358.8,606 V614 M355.4,610.8 L358.8,614.2 L362.2,610.8 M354.4,616.4 H363.2" /><path class="i" d="M398.8,615.4 V607 M395.4,610 L398.8,606.6 L402.2,610 M394.4,616.8 H403.2" /><path class="i" d="M449.4,607 L457.2,615 M457.2,607 L449.4,615" /><path class="i" d="M792.6,606.4 L798.4,611.2 L792.6,616 M800.6,616.4 H807.4" style="stroke-width:1.2"/><path class="i" d="M862.4,611.6 L865.6,614.8 L872.8,607.4" style="stroke-width:1.2"/><path class="i" d="M953.4,615.4 L949.8,611.8 L956.6,605.8 L961.8,611 L957.4,615.4 Z M953.4,615.4 H962 M952.6,609.4 L957.8,614.6" /><path class="i" d="M976.4,609 a3.2,3.2 0 0 1 6.4,0 Z M975.8,609 H983.4 V613 a3.8,3.8 0 0 1 -7.6,0 Z M979.6,609 V616.6 M975.8,611.8 H973.2 M986,611.8 H983.4 M976,614.6 L973.8,616.2 M983.2,614.6 L985.4,616.2 M976.4,607.4 L974.6,605.8 M982.8,607.4 L984.6,605.8" /><path class="i" d="M1005,613.6 L1010.4,608.4 L1015.8,613.6" style="stroke-width:1.3"/></svg>
<span class="t" style="left:26.6px;top:588.9px;font-size:6.6px;line-height:6.6px;color:#fff;font-weight:bold;transform:scaleX(.92)">Pro</span>
</body></html>
